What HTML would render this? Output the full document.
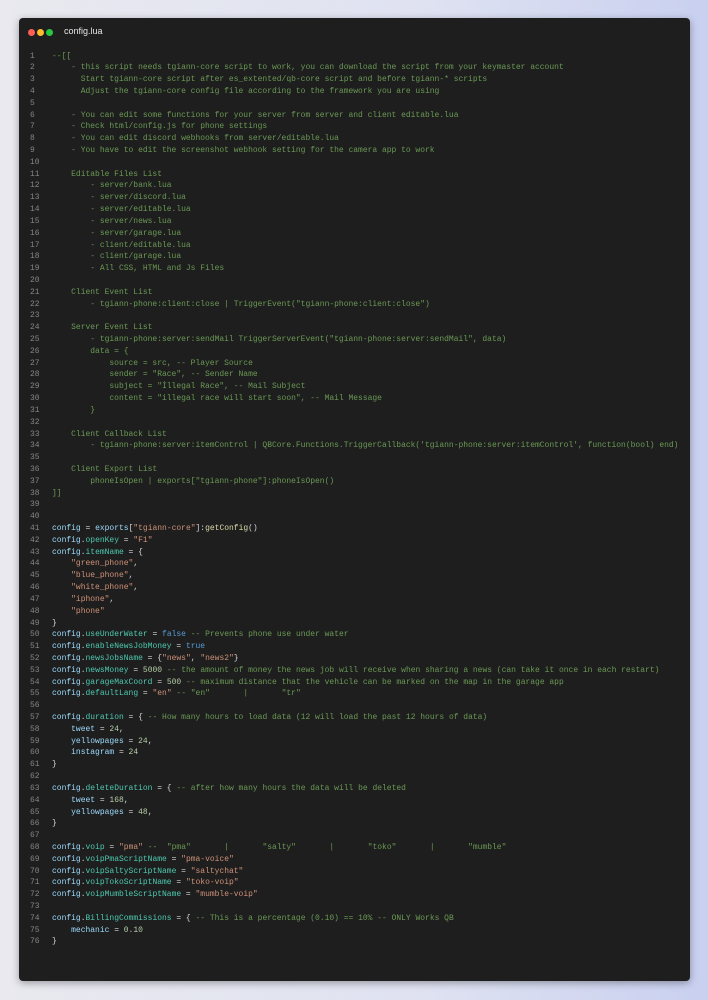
<!DOCTYPE html>
<html><head><meta charset="utf-8"><style>
html,body{margin:0;padding:0;width:708px;height:1000px;overflow:hidden;background:linear-gradient(90deg,#e9e9ef 0%,#dfe2f1 60%,#c9d0f0 100%);font-family:"Liberation Sans",sans-serif}
.win{position:absolute;left:19px;top:18px;width:671px;height:963px;background:#1e1e1e;border-radius:4px;box-shadow:0 2px 8px rgba(0,0,0,.35)}
.dot{position:absolute;top:29px;width:7px;height:7px;border-radius:50%}
.title{position:absolute;left:64px;top:26px;color:#e6e6e6;font-size:9px}
pre{position:absolute;left:0;top:50.5px;margin:0;font-family:"Liberation Mono",monospace;font-size:7.97px;line-height:11.82px;color:#d4d4d4}
.ln{color:#858585;display:inline-block;width:52px;padding-left:30px;box-sizing:border-box}
.c{color:#6a9955}.v{color:#9cdcfe}.p{color:#4ec9b0}.s{color:#ce9178}.f{color:#dcdcaa}.k{color:#569cd6}.n{color:#b5cea8}
</style></head><body>
<div class="win"></div>
<div class="dot" style="left:28px;background:#ff5f57"></div>
<div class="dot" style="left:37px;background:#febc2e"></div>
<div class="dot" style="left:46px;background:#28c840"></div>
<div class="title">config.lua</div>
<pre><span class="ln">1</span><span class="c">--[[</span>
<span class="ln">2</span><span class="c">    - this script needs tgiann-core script to work, you can download the script from your keymaster account</span>
<span class="ln">3</span><span class="c">      Start tgiann-core script after es_extented/qb-core script and before tgiann-* scripts</span>
<span class="ln">4</span><span class="c">      Adjust the tgiann-core config file according to the framework you are using</span>
<span class="ln">5</span>
<span class="ln">6</span><span class="c">    - You can edit some functions for your server from server and client editable.lua</span>
<span class="ln">7</span><span class="c">    - Check html/config.js for phone settings</span>
<span class="ln">8</span><span class="c">    - You can edit discord webhooks from server/editable.lua</span>
<span class="ln">9</span><span class="c">    - You have to edit the screenshot webhook setting for the camera app to work</span>
<span class="ln">10</span>
<span class="ln">11</span><span class="c">    Editable Files List</span>
<span class="ln">12</span><span class="c">        - server/bank.lua</span>
<span class="ln">13</span><span class="c">        - server/discord.lua</span>
<span class="ln">14</span><span class="c">        - server/editable.lua</span>
<span class="ln">15</span><span class="c">        - server/news.lua</span>
<span class="ln">16</span><span class="c">        - server/garage.lua</span>
<span class="ln">17</span><span class="c">        - client/editable.lua</span>
<span class="ln">18</span><span class="c">        - client/garage.lua</span>
<span class="ln">19</span><span class="c">        - All CSS, HTML and Js Files</span>
<span class="ln">20</span>
<span class="ln">21</span><span class="c">    Client Event List</span>
<span class="ln">22</span><span class="c">        - tgiann-phone:client:close | TriggerEvent("tgiann-phone:client:close")</span>
<span class="ln">23</span>
<span class="ln">24</span><span class="c">    Server Event List</span>
<span class="ln">25</span><span class="c">        - tgiann-phone:server:sendMail TriggerServerEvent("tgiann-phone:server:sendMail", data)</span>
<span class="ln">26</span><span class="c">        data = {</span>
<span class="ln">27</span><span class="c">            source = src, -- Player Source</span>
<span class="ln">28</span><span class="c">            sender = "Race", -- Sender Name</span>
<span class="ln">29</span><span class="c">            subject = "İllegal Race", -- Mail Subject</span>
<span class="ln">30</span><span class="c">            content = "illegal race will start soon", -- Mail Message</span>
<span class="ln">31</span><span class="c">        }</span>
<span class="ln">32</span>
<span class="ln">33</span><span class="c">    Client Callback List</span>
<span class="ln">34</span><span class="c">        - tgiann-phone:server:itemControl | QBCore.Functions.TriggerCallback('tgiann-phone:server:itemControl', function(bool) end)</span>
<span class="ln">35</span>
<span class="ln">36</span><span class="c">    Client Export List</span>
<span class="ln">37</span><span class="c">        phoneIsOpen | exports["tgiann-phone"]:phoneIsOpen()</span>
<span class="ln">38</span><span class="c">]]</span>
<span class="ln">39</span>
<span class="ln">40</span>
<span class="ln">41</span><span class="v">config</span> = <span class="v">exports</span>[<span class="s">"tgiann-core"</span>]:<span class="f">getConfig</span>()
<span class="ln">42</span><span class="v">config</span>.<span class="p">openKey</span> = <span class="s">"F1"</span>
<span class="ln">43</span><span class="v">config</span>.<span class="p">itemName</span> = {
<span class="ln">44</span>    <span class="s">"green_phone"</span>,
<span class="ln">45</span>    <span class="s">"blue_phone"</span>,
<span class="ln">46</span>    <span class="s">"white_phone"</span>,
<span class="ln">47</span>    <span class="s">"iphone"</span>,
<span class="ln">48</span>    <span class="s">"phone"</span>
<span class="ln">49</span>}
<span class="ln">50</span><span class="v">config</span>.<span class="p">useUnderWater</span> = <span class="k">false</span> <span class="c">-- Prevents phone use under water</span>
<span class="ln">51</span><span class="v">config</span>.<span class="p">enableNewsJobMoney</span> = <span class="k">true</span>
<span class="ln">52</span><span class="v">config</span>.<span class="p">newsJobsName</span> = {<span class="s">"news"</span>, <span class="s">"news2"</span>}
<span class="ln">53</span><span class="v">config</span>.<span class="p">newsMoney</span> = <span class="n">5000</span> <span class="c">-- the amount of money the news job will receive when sharing a news (can take it once in each restart)</span>
<span class="ln">54</span><span class="v">config</span>.<span class="p">garageMaxCoord</span> = <span class="n">500</span> <span class="c">-- maximum distance that the vehicle can be marked on the map in the garage app</span>
<span class="ln">55</span><span class="v">config</span>.<span class="p">defaultLang</span> = <span class="s">"en"</span> <span class="c">-- "en"       |       "tr"</span>
<span class="ln">56</span>
<span class="ln">57</span><span class="v">config</span>.<span class="p">duration</span> = { <span class="c">-- How many hours to load data (12 will load the past 12 hours of data)</span>
<span class="ln">58</span>    <span class="v">tweet</span> = <span class="n">24</span>,
<span class="ln">59</span>    <span class="v">yellowpages</span> = <span class="n">24</span>,
<span class="ln">60</span>    <span class="v">instagram</span> = <span class="n">24</span>
<span class="ln">61</span>}
<span class="ln">62</span>
<span class="ln">63</span><span class="v">config</span>.<span class="p">deleteDuration</span> = { <span class="c">-- after how many hours the data will be deleted</span>
<span class="ln">64</span>    <span class="v">tweet</span> = <span class="n">168</span>,
<span class="ln">65</span>    <span class="v">yellowpages</span> = <span class="n">48</span>,
<span class="ln">66</span>}
<span class="ln">67</span>
<span class="ln">68</span><span class="v">config</span>.<span class="p">voip</span> = <span class="s">"pma"</span> <span class="c">--  "pma"       |       "salty"       |       "toko"       |       "mumble"</span>
<span class="ln">69</span><span class="v">config</span>.<span class="p">voipPmaScriptName</span> = <span class="s">"pma-voice"</span>
<span class="ln">70</span><span class="v">config</span>.<span class="p">voipSaltyScriptName</span> = <span class="s">"saltychat"</span>
<span class="ln">71</span><span class="v">config</span>.<span class="p">voipTokoScriptName</span> = <span class="s">"toko-voip"</span>
<span class="ln">72</span><span class="v">config</span>.<span class="p">voipMumbleScriptName</span> = <span class="s">"mumble-voip"</span>
<span class="ln">73</span>
<span class="ln">74</span><span class="v">config</span>.<span class="p">BillingCommissions</span> = { <span class="c">-- This is a percentage (0.10) == 10% -- ONLY Works QB</span>
<span class="ln">75</span>    <span class="v">mechanic</span> = <span class="n">0.10</span>
<span class="ln">76</span>}
</pre>
</body></html>
